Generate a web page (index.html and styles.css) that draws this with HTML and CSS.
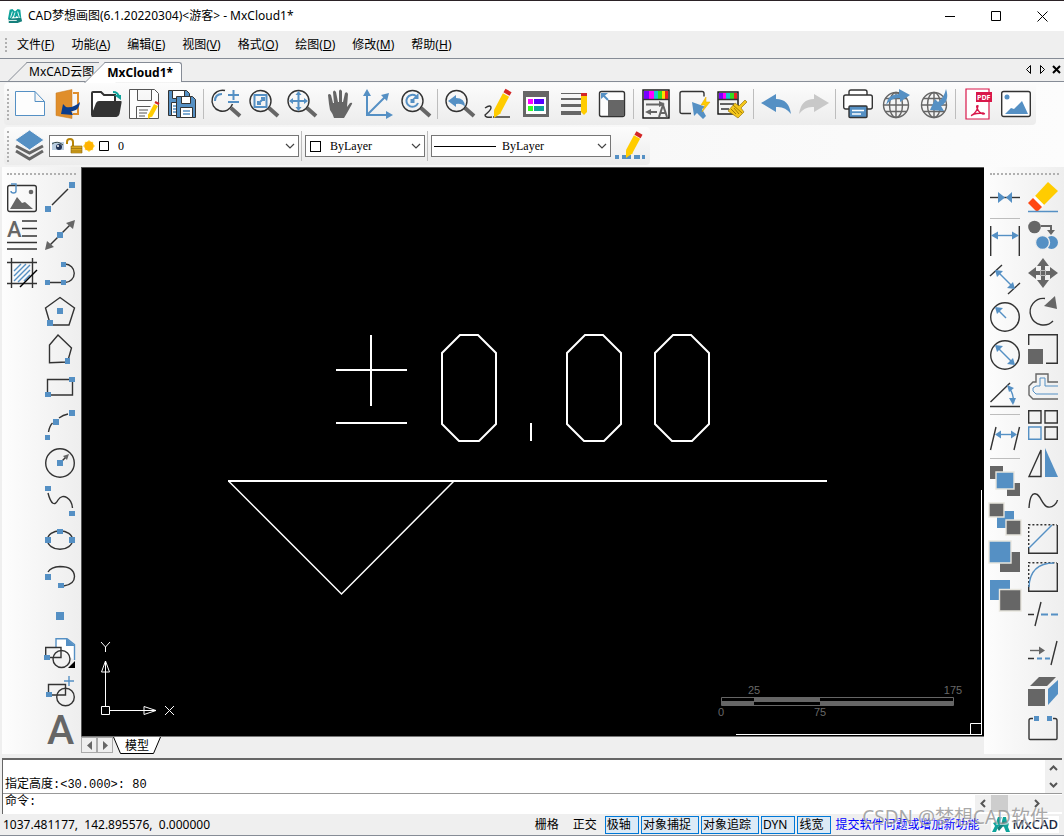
FILE: index.html
```html
<!DOCTYPE html>
<html lang="zh-CN">
<head>
  <meta charset="UTF-8" />
  <meta name="viewport" content="width=device-width, initial-scale=1.0"/>
  <title>CAD梦想画图</title>
  <link rel="stylesheet" href="styles.css">
</head>
<body>
  <svg class="defs" aria-hidden="true">
    <symbol id="lens" viewBox="0 0 30 30" overflow="visible">
      <path class="gl" stroke-width="4" d="M20 19l9 8"/>
      <circle cx="11.500" cy="12" r="10.500"/>
    </symbol>
    <symbol id="globe" viewBox="0 0 30 30" overflow="visible">
      <g class="gl"><circle cx="15" cy="16" r="12.500"/><ellipse cx="15" cy="16" rx="6.500" ry="12.500"/><path d="M15 3.500V28.500M2.500 16h25M4 9.500h22M4 22.500h22"/></g>
    </symbol>
    <symbol id="mx" viewBox="0 0 18 18">
      <path fill="#0fa39b" d="M3 2l3-1 3 3 3-3 3 1 1 9-3 0-2-2-2 2-2-2-2 3-4 1z"/>
      <path fill="#16807c" d="M2 12l14-1 1 4-5 2H2z"/>
      <path fill="none" stroke="#fff" d="M6 4L4 11M9 5l-2 6M12 4l2 7M2 14h9"/>
    </symbol>
    <symbol id="mxflat" viewBox="0 0 18 17">
      <path fill="#0fa39b" d="M6 1h4l-2 5 1 3-3 2-2 5H0l3-6-2-3 3-1zM11 1h3l1 5 2 1-1 4 2 5h-4l-2-5-3-2z"/>
      <path fill="#16807c" d="M5 12l7-7 1 3-6 7z"/>
    </symbol>
    <symbol id="chev" viewBox="0 0 10 10"><path fill="none" stroke="#444" stroke-width="1.200" d="M1 3l4 4 4-4"/></symbol>
  </svg>

  <header class="titlebar">
    <svg class="logo"><use href="#mx"/></svg>
    <h1>CAD梦想画图(6.1.20220304)&lt;游客&gt; - MxCloud1*</h1>
    <button class="win" aria-label="最小化"><svg viewBox="0 0 11 11"><path d="M0 5.500h10"/></svg></button>
    <button class="win" aria-label="最大化"><svg viewBox="0 0 11 11"><path d="M.5.5h9v9h-9z"/></svg></button>
    <button class="win" aria-label="关闭"><svg viewBox="0 0 11 11"><path d="M.5.5l10 10M10.500.5l-10 10"/></svg></button>
  </header>

  <nav class="menubar">
    <span class="grip"></span>
    <button>文件(<u>F</u>)</button>
    <button>功能(<u>A</u>)</button>
    <button>编辑(<u>E</u>)</button>
    <button>视图(<u>V</u>)</button>
    <button>格式(<u>O</u>)</button>
    <button>绘图(<u>D</u>)</button>
    <button>修改(<u>M</u>)</button>
    <button>帮助(<u>H</u>)</button>
  </nav>

  <div class="tabs">
    <button class="tab">MxCAD云图</button>
    <button class="tab active">MxCloud1*</button>
    <div class="tab-nav">
      <button aria-label="上一个"><svg viewBox="0 0 9 9"><path d="M6.500.5v8l-4-4z"/></svg></button>
      <button aria-label="下一个"><svg viewBox="0 0 9 9"><path d="M2.500.5v8l4-4z"/></svg></button>
      <button aria-label="关闭标签"><svg viewBox="0 0 9 9"><path stroke-width="2" d="M1 1l7 7M8 1L1 8"/></svg></button>
    </div>
  </div>

  <div class="toolbars">
    <div class="toolbar">
      <span class="grip"></span>
      <button class="tool" aria-label="新建"><svg viewBox="0 0 30 30"><path class="bl" fill="#fdfdfd" stroke-width="1" d="M.5 2.500H20l9.500 10v14H.5zM20 2.500v10h9.500"/></svg></button>
      <button class="tool" aria-label="打开"><svg viewBox="0 0 30 30"><path stroke="#e08e2b" stroke-width="2" d="M20 4h5v21h-5"/><path fill="#e08e2b" stroke="#c67a20" stroke-width=".5" d="M3 4L19 .5v29L3 26.500z"/><path fill="#0b3d8c" stroke="none" d="M27 13c-1 7-4 9-9 9l2 4-12-1 2-10 3 3c5 1 10-1 14-5z"/></svg></button>
      <button class="tool" aria-label="打开文件"><svg viewBox="0 0 30 30"><path fill="#fff" stroke="#333" stroke-width="2" d="M1 26V4q0-1 1-1h8l3 3h11v8"/><path fill="#333" stroke="none" d="M0 27L5 14q1-2 3-2h22q1 0 .5 2l-2 11q-1 3-3 3H1z"/><path stroke="#0fa39b" stroke-width="2" d="M22 3q5 0 6 5"/><path fill="#0fa39b" stroke="none" d="M23 6h7v5z"/></svg></button>
      <button class="tool" aria-label="保存"><svg viewBox="0 0 30 30"><path fill="#fdfdfd" stroke="#555" stroke-width="1" d="M.5.5h25l4 4v25H.5zM8.500.5v11h14V.5M7.500 29.500v-12h14M10 21h9M10 24h8M10 27h6"/><path stroke="#fc0" stroke-width="4.500" d="M27 16l-6 11"/><path stroke="#d32626" stroke-width="4.500" d="M28.500 13l-1 2"/><path fill="#fc0" stroke="none" d="M19 25l4 2-4 3z"/></svg></button>
      <button class="tool" aria-label="全部保存"><svg viewBox="0 0 30 30"><path fill="#5590c4" stroke-width="1" d="M1.500 1.500h18l3 3v22h-21z"/><path fill="#fff" stroke-width="1" d="M5.500 1.500h12v8h-12zM4.500 13.500h10v13h-10z"/><path class="bl" d="M6 17h6M6 20h6M6 23h6"/><path fill="#5590c4" stroke-width="1" d="M9.500 7.500h16l3 3v18h-19z"/><path fill="#fff" stroke-width="1" d="M14.500 7.500h9v7h-9zM13.500 18.500h12v10h-12z"/><path class="bl" d="M16 22h7M16 25h7"/></svg></button>
      <span class="sep"></span>
      <button class="tool" aria-label="缩放"><svg viewBox="0 0 30 30"><path class="gl" stroke-width="4" d="M20 19l9 8"/><path d="M14 1.500A10.500 10.500 0 1 0 21.500 15"/><path class="bl" stroke-width="2" d="M4 12q0-7 7-7M17 6h11M22.500 1v10M17 13h11"/></svg></button>
      <button class="tool" aria-label="窗口缩放"><svg viewBox="0 0 30 30"><use href="#lens"/><path class="bl" stroke-width="2" d="M5.500 6h12v12h-12zM9 15l6-6M9 12v3h3M12 9h3v3"/></svg></button>
      <button class="tool" aria-label="范围缩放"><svg viewBox="0 0 30 30"><use href="#lens"/><path class="bl" stroke-width="2" d="M11.500 5v14M5 12h13"/><path class="b" d="M11.500 2l3 4h-6zM11.500 22l3-4h-6zM2 12l4-3v6zM21 12l-4-3v6z"/></svg></button>
      <button class="tool" aria-label="平移"><svg viewBox="0 0 30 30"><path class="g" d="M9 29q-1-4-4-8l-1-6-1-9q1-2 3 0l2 8h1L8 3q1-3 3 0l2 10h1V2q1-3 3 0v11h1l2-9q2-2 3 1l-1 13 3-4q3-1 2 1l-5 9-3 5z"/></svg></button>
      <button class="tool" aria-label="坐标系"><svg viewBox="0 0 30 30"><path class="bl" stroke-width="2" d="M4 5v21h20M4 26L22 8"/><path class="b" d="M4 0l4 7H0zM30 26l-7 4v-8zM26 4l-2 8-6-6z"/></svg></button>
      <button class="tool" aria-label="动态缩放"><svg viewBox="0 0 30 30"><use href="#lens"/><path class="bl" stroke-width="2" d="M15 7a6 6 0 1 0 2 7"/><path class="b" d="M17.500 4v6h-6zM9.500 10h4v4h-4z"/></svg></button>
      <span class="sep"></span>
      <button class="tool" aria-label="上一视图"><svg viewBox="0 0 30 30"><use href="#lens"/><path class="b" d="M3 12l8-6v3q9 0 9 9-3-4-9-3v3z"/></svg></button>
      <button class="tool" aria-label="编辑"><svg viewBox="0 0 30 30"><path class="gl" stroke-width="2" d="M10 28h17"/><path d="M2 19q6-4 6 0 0 2-6 7 0 3 7 2"/><path stroke="#fc0" stroke-width="7" d="M23 6l-9 17"/><path stroke="#d32626" stroke-width="7" d="M25.500 1.500L23.500 5"/><path fill="#fc0" stroke="none" d="M11 21l7 3-7 5z"/></svg></button>
      <button class="tool" aria-label="属性"><svg viewBox="0 0 30 30"><path class="g" d="M2 2h26v26H2z"/><path fill="#fff" stroke="none" d="M5 8h20v17H5z"/><path fill="#f0f" stroke="none" d="M7 10h5v5H7z"/><path fill="#50f" stroke="none" d="M13 10h10v5H13z"/><path fill="#3f2" stroke="none" d="M7 17h5v5H7z"/><path fill="#0fa39b" stroke="none" d="M13 17h10v5H13z"/></svg></button>
      <button class="tool" aria-label="线型"><svg viewBox="0 0 30 30"><path class="gl" stroke-width="1" d="M2 4.500h20"/><path class="gl" stroke-width="2" d="M2 10h20"/><path class="gl" stroke-width="3" d="M2 16.500h20"/><path class="gl" stroke-width="4" d="M2 24h20"/><path fill="#fc0" stroke="none" d="M22 6h6v17l-3 3-3-3z"/><path fill="#d32626" stroke="none" d="M22 4h6v3h-6z"/></svg></button>
      <button class="tool" aria-label="图块"><svg viewBox="0 0 30 30"><rect x="2.500" y="2.500" width="25" height="25" rx="2" fill="#fdfdfd"/><path class="g" d="M11 11h16v16H11z"/><path class="bl" stroke-width="2" d="M5 5l6 6"/><path class="b" d="M4 4h7l-7 6z"/></svg></button>
      <span class="sep"></span>
      <button class="tool" aria-label="文字样式"><svg viewBox="0 0 30 30"><rect x="2" y="1" width="26" height="28" fill="#f4f4f4" stroke="#111"/><g stroke="none"><path fill="#70f" d="M3 2h5v8H3z"/><path fill="#f0f" d="M8 2h5v8H8z"/><path fill="#1cc" d="M13 2h4v8h-4z"/><path fill="#3d2" d="M17 2h4v8h-4z"/><path fill="#fd0" d="M21 2h3v8h-3z"/><path fill="#e22" d="M24 2h3v8h-3z"/></g><path d="M2 10.500h26"/><path class="gl" stroke-width="2" d="M5 15.500h17M8 23h8M18 28l4-12 4 12M19 24h6"/><path class="g" d="M24 15l-6-3v6zM4 23l6-3v6z"/></svg></button>
      <button class="tool" aria-label="快速选择"><svg viewBox="0 0 30 30"><path d="M12 24.500H3q-2 0-2-2v-18q0-2 2-2h20q2 0 2 2v3"/><path class="b" d="M13 13l14 5-4 2 4 7-3 3-6-6-3 3z"/><path fill="#fc0" stroke="#e4a800" stroke-width=".5" d="M27 8l-5 8h4l-3 7 8-10h-4z"/></svg></button>
      <button class="tool" aria-label="特性匹配"><svg viewBox="0 0 30 30"><rect x="1" y="3" width="20" height="22" fill="#f4f4f4" stroke="#111"/><g stroke="none"><path fill="#70f" d="M2 4h4v6H2z"/><path fill="#f0f" d="M6 4h3v6H6z"/><path fill="#1cc" d="M9 4h4v6H9z"/><path fill="#3d2" d="M13 4h4v6h-4z"/><path fill="#e22" d="M17 4h3v6h-3z"/></g><path d="M1 10.500h20M3 15h14"/><path class="gl" stroke-width="2" d="M4 20h8"/><path fill="#f5c61a" stroke="#8a6a00" stroke-width=".6" d="M18 14l4 3 6-6 2 2-6 6 3 4-6 6-10-7z"/><path stroke="#8a6a00" stroke-width=".8" d="M16 16l9 8M14 20l5 5M17 19l5 6"/></svg></button>
      <span class="sep"></span>
      <button class="tool" aria-label="撤销"><svg viewBox="0 0 30 30"><path class="b" d="M0 14L15 5v5q13 0 15 15-6-8-15-7v5z"/></svg></button>
      <button class="tool" aria-label="重做"><svg viewBox="0 0 30 30"><path fill="#c8c8c8" stroke="none" d="M30 14L15 5v5Q2 10 0 25q6-8 15-7v5z"/></svg></button>
      <span class="sep"></span>
      <button class="tool" aria-label="打印"><svg viewBox="0 0 30 30"><path fill="#fff" d="M6 7V3q0-2 2-2h14q2 0 2 2v4"/><rect x=".7" y="6" width="28.600" height="14" rx="2" fill="#fff"/><rect x="6" y="17" width="18" height="11.500" rx="1" fill="#5590c4"/><path stroke="#fff" d="M9 21.500h12M9 25h9"/></svg></button>
      <button class="tool" aria-label="发布"><svg viewBox="0 0 30 30"><use href="#globe"/><path class="b" d="M5 16q2-11 13-11V0l11 6-10 7V9q-8-1-14 7z"/></svg></button>
      <button class="tool" aria-label="下载"><svg viewBox="0 0 30 30"><use href="#globe"/><path class="b" d="M27 0q4 12-5 17l3 5-14-1 5-11 3 3q6-4 8-13z"/></svg></button>
      <span class="sep"></span>
      <button class="tool" aria-label="导出PDF"><svg viewBox="0 0 30 30"><path fill="#fff" stroke="#d9174a" stroke-width="1.200" d="M3 0h23v30H3z"/><path fill="#d9174a" stroke="none" d="M13 3h16v10H13z"/><text class="pdf" x="14" y="11">PDF</text><path stroke="#d9174a" d="M9 26q5-3 6-9-2-1-1 2 2 5 6 6 3 0 0-1-7 0-11 2-1 1 0 0z"/></svg></button>
      <button class="tool" aria-label="导出图片"><svg viewBox="0 0 30 30"><rect x=".7" y="2.500" width="28.600" height="25" rx="2" fill="#fff"/><circle class="b" cx="6" cy="8" r="2.500"/><path class="b" d="M4 25l6-6 3 1 8-8 6 13z"/></svg></button>
    </div>

    <div class="toolbar props">
      <span class="grip"></span>
      <button class="tool" aria-label="图层"><svg viewBox="0 0 30 30"><path class="gl" stroke-width="3" d="M1 20l13.500 8L28 20M1 15l13.500 7L28 15"/><path fill="#5590c4" stroke="#f7f7f7" stroke-width="1" d="M14.500-1L29 9l-14.500 10L0 9z"/></svg></button>
      <div class="combo layer">
        <svg class="state" viewBox="0 0 58 16">
          <path fill="#b9cde0" d="M1 4h12v8H1z"/><path fill="none" stroke="#344" d="M1 6q5-4 11 1"/><circle cx="8" cy="9" r="3" fill="#235"/><circle cx="7" cy="8" r="1" fill="#fff"/>
          <path fill="none" stroke="#b8860b" stroke-width="2" d="M16 6V4q0-3 3-3t3 3v4"/><path fill="#d9a520" stroke="#8a6508" stroke-width=".6" d="M20 8h11v7H20zM20 10.500h11M20 13h11"/>
          <path stroke="#fe6" stroke-width="1.500" d="M38 2v12M32 8h12M34 4l8 8M42 4l-8 8"/><circle cx="38" cy="8" r="4.800" fill="#ffb300"/>
          <path fill="#fff" stroke="#000" d="M48.500 3.500h9v9h-9z"/>
        </svg>
        <select aria-label="图层"><option>0</option></select>
        <svg class="chev"><use href="#chev"/></svg>
      </div>
      <span class="sep"></span>
      <div class="combo color">
        <span class="swatch"></span>
        <select aria-label="颜色"><option>ByLayer</option></select>
        <svg class="chev"><use href="#chev"/></svg>
      </div>
      <span class="sep"></span>
      <div class="combo linetype">
        <span class="line"></span>
        <select aria-label="线型"><option>ByLayer</option></select>
        <svg class="chev"><use href="#chev"/></svg>
      </div>
      <button class="tool" aria-label="线型管理"><svg viewBox="0 0 30 30"><path class="bl" stroke-width="4" stroke-dasharray="4 3 9 3 6 2" d="M0 26h30"/><path stroke="#fc0" stroke-width="7" d="M22 6l-8 15"/><path stroke="#d32626" stroke-width="7" d="M24.500 2l-2 3.500"/><path fill="#fc0" stroke="none" d="M11 19l7 3-7 5z"/></svg></button>
    </div>
  </div>

  <main class="workspace">
    <aside class="palette left">
      <span class="grip-h"></span>
      <div class="cols">
        <div class="col">
          <button class="tool" aria-label="图像"><svg viewBox="0 0 30 30"><rect x=".7" y="3.500" width="28.600" height="26" rx="2"/><path class="g" d="M3 27l7-12 5 6 3-1 8 7z"/><circle class="g" cx="24" cy="10" r="2.300"/><path class="bl" d="M4 2h5v7q0 2-2.500 2T4 9"/></svg></button>
          <button class="tool" aria-label="多行文字"><svg viewBox="0 0 30 30"><text class="glyph small" x="0" y="17">A</text><path d="M15 1h15M15 8.500h15M15 16h15M0 22.500h30M0 29h30"/></svg></button>
          <button class="tool" aria-label="填充"><svg viewBox="0 0 30 30"><path class="bl" d="M7 13l7-7M7 18L19 6M7 23L23 7M11 24l12-12M17 23l6-6"/><path d="M0 4.500h30M0 25.500h30M4.500 0v30M25.500 0v30"/><path stroke="#000" d="M30 12L13 29"/></svg></button>
        </div>
        <div class="col">
          <button class="tool" aria-label="直线"><svg viewBox="0 0 30 30"><path d="M7 23L23 7"/><path class="b" d="M0 24h6v6H0zM24 0h6v6h-6z"/></svg></button>
          <button class="tool" aria-label="构造线"><svg viewBox="0 0 30 30"><path d="M4 26L26 4"/><path class="g" d="M30 0l-2 9-7-6zM0 30l2-9 7 6z"/><path class="b" d="M12 12h6v6h-6z"/></svg></button>
          <button class="tool" aria-label="多段线"><svg viewBox="0 0 30 30"><path d="M4 24.500h14M20 6a9.200 9.200 0 0 1 0 18.500"/><path class="b" d="M0 22h5v5H0zM16 4h5v5h-5zM16 22h5v5h-5z"/></svg></button>
          <button class="tool" aria-label="正多边形"><svg viewBox="0 0 30 30"><path d="M15 1.500l14.500 10.500L24 29H5.500L.5 12z"/><path class="b" d="M12 12h6v6h-6zM2 24h6v6H2z"/></svg></button>
          <button class="tool" aria-label="多边形"><svg viewBox="0 0 30 30"><path d="M13 1l13.500 13-4 14-18 .8V11z"/><path class="b" d="M20 24h5v6h-5z"/></svg></button>
          <button class="tool" aria-label="矩形"><svg viewBox="0 0 30 30"><path d="M2.500 7.500h25v15.500h-25z"/><path class="b" d="M24 5h6v5h-6zM0 20h6v5H0z"/></svg></button>
          <button class="tool" aria-label="圆弧"><svg viewBox="0 0 30 30"><path d="M3.500 22q1-6 4-9M14 8q4-3 9-4"/><path class="b" d="M0 25h5v5H0zM8 9h6v6H8zM24 0h6v6h-6z"/></svg></button>
          <button class="tool" aria-label="圆"><svg viewBox="0 0 30 30"><circle cx="15" cy="15" r="14.300"/><path d="M15 15l6-6"/><path class="g" d="M24 6l-2 6-4-4z"/><path class="b" d="M12 12h6v6h-6z"/></svg></button>
          <button class="tool" aria-label="样条曲线"><svg viewBox="0 0 30 30"><path d="M3 7c3 12 7 13 10 7 5-8 14-1 14.500 8"/><path class="b" d="M0 0h6v5H0zM24 25h6v5h-6z"/></svg></button>
          <button class="tool" aria-label="椭圆"><svg viewBox="0 0 30 30"><ellipse cx="15" cy="16" rx="12.500" ry="9.300"/><path class="b" d="M12 5h6v5h-6zM0 13h6v6H0zM24 13h6v6h-6z"/></svg></button>
          <button class="tool" aria-label="椭圆弧"><svg viewBox="0 0 30 30"><path d="M3 10q3-5 12-5.500 14 0 14.500 10 0 8-11 9.500"/><path class="b" d="M0 12h6v6H0zM13 21h6v5h-6z"/></svg></button>
          <button class="tool" aria-label="点"><svg viewBox="0 0 30 30"><path class="b" d="M11 12h8v8h-8z"/></svg></button>
          <button class="tool" aria-label="插入块"><svg viewBox="0 0 30 30"><path class="bl" fill="#fff" d="M11 10V.7h11l7.500 6V22"/><path class="b" d="M21 0l9 8h-9z"/><path d="M.7 9.500H16v10H.7z"/><circle cx="16.500" cy="21" r="8.500"/><path class="b" d="M-1 17h6v5h-6z"/><path fill="#000" stroke="none" d="M30 23v7h-7z"/></svg></button>
          <button class="tool" aria-label="创建块"><svg viewBox="0 0 30 30"><path class="bl" d="M24 0v10M19 5h10"/><path d="M3.500 8.500h17v10.500h-17z"/><circle cx="20.500" cy="21" r="8.800"/><path class="b" d="M1 16h6v5H1z"/></svg></button>
          <button class="tool" aria-label="单行文字"><svg viewBox="0 0 30 30"><text class="glyph" x="2" y="30">A</text></svg></button>
        </div>
      </div>
    </aside>

    <section class="view">
      <svg class="drawing">
        <g class="w">
          <path d="M289 167v71M254 202h71M254 255h71M449 255v18" stroke-width="2"/>
          <path id="zero" stroke-width="2" d="M378 167h18l18 18v71l-17 17h-20l-17-17v-71z"/>
          <use href="#zero" x="125"/>
          <use href="#zero" x="213"/>
          <path d="M146 313h599" stroke-width="2"/>
          <path d="M146.500 313L259.500 426 372 313" stroke-width="1.500"/>
        </g>
        <!-- ucs axes, bottom left -->
        <svg y="100%" overflow="visible">
          <g class="w">
            <path d="M19.500-29.500h8v8h-8zM23.500-30v-34M28-25.500h34M23.500-75l-4 11h8zM23.500-75v11M74-25.500l-12-4v8zM74-25.500h-12M19-94l4.500 5 4.500-5M23.500-89v5M83-30l9 9M92-30l-9 9"/>
          </g>
        </svg>
        <!-- scale bar and cursor, bottom right -->
        <svg x="100%" y="100%" overflow="visible">
          <path fill="none" stroke="#666" d="M-262.500-38.500h232v8h-232z"/>
          <path fill="#666" d="M-263-35h33v4h-33zM-230-38h66v4h-66zM-164-35h134v4h-134z"/>
          <g class="scale">
            <text x="-230" y="-42">25</text><text x="-31" y="-42">175</text>
            <text x="-263" y="-20">0</text><text x="-164" y="-20">75</text>
          </g>
          <path class="w" d="M-2.500-246v244M-248-1.500h246M-13.500-12.500h11v11h-11z"/>
        </svg>
      </svg>
      <div class="sheets">
        <button class="step" aria-label="前一页"><svg viewBox="0 0 9 9"><path d="M7 0v9L2 4.500z"/></svg></button>
        <button class="step" aria-label="后一页"><svg viewBox="0 0 9 9"><path d="M2 0v9l5-4.500z"/></svg></button>
        <button class="sheet"><svg viewBox="0 0 48 17" preserveAspectRatio="none"><path d="M.5 0l7 16.500h33L47.500 0"/></svg><span>模型</span></button>
      </div>
    </section>

    <aside class="palette right">
      <span class="grip-h"></span>
      <div class="cols">
        <div class="col">
          <button class="tool" aria-label="打断标注"><svg viewBox="0 0 30 30"><path d="M0 15.500h30"/><path class="b" d="M8 10l7 5.500L8 21zM22 10l-6 5.500 6 5.500z"/></svg></button>
          <span class="sep-h"></span>
          <button class="tool" aria-label="线性标注"><svg viewBox="0 0 30 30"><path d="M.7 0v30M29.300 0v30"/><path class="bl" d="M5 9.500h20"/><path class="b" d="M1 9.500l7-4v8zM29 9.500l-7-4v8z"/></svg></button>
          <button class="tool" aria-label="对齐标注"><svg viewBox="0 0 30 30"><path d="M0 12L12 1M18 30l12-11"/><path class="bl" d="M8 8l15 15"/><path class="b" d="M5 6l8 1-6 6zM25 25l-8-1 6-6z"/></svg></button>
          <button class="tool" aria-label="半径标注"><svg viewBox="0 0 30 30"><circle cx="15" cy="15" r="14.300"/><path class="bl" d="M16 16l-8-8"/><path class="b" d="M5 5l8 1-6 6z"/></svg></button>
          <button class="tool" aria-label="直径标注"><svg viewBox="0 0 30 30"><circle cx="15" cy="15" r="14.300"/><path class="bl" d="M8 8l15 15"/><path class="b" d="M5 5l8 1-6 6zM25 25l-8-1 6-6z"/></svg></button>
          <button class="tool" aria-label="角度标注"><svg viewBox="0 0 30 30"><path d="M0 28.500h30M.5 24L20 5"/><path class="bl" d="M19 10q5 6 4.500 15"/><path class="b" d="M17 7l7 3-5 4zM23 27l-4-7h7z"/></svg></button>
          <span class="sep-h"></span>
          <button class="tool" aria-label="倾斜标注"><svg viewBox="0 0 30 30"><path d="M.5 28L6 5M24 28l5.500-23"/><path class="bl" d="M8 12.500h16"/><path class="b" d="M5 12.500l6-4v8zM27 12.500l-6-4v8z"/></svg></button>
          <span class="sep-h"></span>
          <button class="tool" aria-label="前置"><svg viewBox="0 0 30 30"><path class="g" d="M0 0h13v13H0zM17 17h13v13H17z"/><path fill="#5590c4" stroke="#e8e6de" d="M6 6h18v17H6z"/></svg></button>
          <button class="tool" aria-label="后置"><svg viewBox="0 0 30 30"><path class="b" d="M7 7h17v17H7z"/><path fill="#666" stroke="#e8e6de" d="M-1-1h15v14H-1zM16 16h15v15H16z"/></svg></button>
          <button class="tool" aria-label="置于顶层"><svg viewBox="0 0 30 30"><path class="g" d="M10 10h20v20H10z"/><path fill="#5590c4" stroke="#e8e6de" d="M-1-1h22v22H-1z"/></svg></button>
          <button class="tool" aria-label="置于底层"><svg viewBox="0 0 30 30"><path class="b" d="M0 0h20v20H0z"/><path fill="#666" stroke="#e8e6de" d="M9.500 9.500H31V31H9.500z"/></svg></button>
        </div>
        <div class="col">
          <button class="tool" aria-label="删除"><svg viewBox="0 0 30 30"><path fill="#fc0" stroke="none" d="M20 0l10 9-14 14-9-9z"/><path fill="#fff" stroke="none" d="M7 14l9 9-2 2-9-9z"/><path fill="#ff4713" stroke="none" d="M5 16l9 9-4 4H8l-8-8z"/><path class="bl" stroke-width="1.500" d="M0 29.500h30"/></svg></button>
          <button class="tool" aria-label="复制"><svg viewBox="0 0 30 30"><circle class="g" cx="6.500" cy="7" r="6.300"/><path class="gl" stroke-width="2" d="M13 6h10v5"/><path class="g" d="M19 10h8l-4 5z"/><circle class="b" cx="23.500" cy="22.500" r="6.500"/><circle cx="14.500" cy="22.500" r="7" fill="#5590c4" stroke="#eee"/></svg></button>
          <button class="tool" aria-label="移动"><svg viewBox="0 0 30 30"><path class="gl" stroke-width="4" d="M15 4v22M4 15h22"/><path class="g" d="M15 0l6 8H9zM15 30l6-8H9zM0 15l8-6v12zM30 15l-8-6v12z"/><path fill="#666" stroke="#bbb" stroke-width="1" d="M12.500 12.500h5v5h-5z"/></svg></button>
          <button class="tool" aria-label="旋转"><svg viewBox="0 0 30 30"><path d="M17 2.500A13.300 13.300 0 1 0 25 25"/><path class="g" d="M16 10L27 0l2 13z"/></svg></button>
          <button class="tool" aria-label="缩放对象"><svg viewBox="0 0 30 30"><path d="M.7 11V.7h28.600v28.600H18"/><path class="g" d="M0 15h15v15H0z"/></svg></button>
          <button class="tool" aria-label="偏移"><svg viewBox="0 0 30 30"><path class="gl" d="M30 27H5l-4-4V14l4-4h3V2h12v8h10"/><path class="bl" stroke-width="1" d="M30 22H8l-3-3v-3l3-2h4V6h5v8h13"/></svg></button>
          <button class="tool" aria-label="阵列"><svg viewBox="0 0 30 30"><path d="M.7.7H13V13H.7zM17 .7h12.300V13H17zM17 17h12.300v12.300H17z"/><path class="bl" d="M.7 17H13v12.300H.7z"/></svg></button>
          <button class="tool" aria-label="镜像"><svg viewBox="0 0 30 30"><path d="M13 2v26.500H1z"/><path class="b" d="M17 0l13 29H17z"/></svg></button>
          <button class="tool" aria-label="样条编辑"><svg viewBox="0 0 30 30"><path d="M1 22q1-16 7-14c5 1 6 12 12 13 5 1 9-4 9.500-7"/></svg></button>
          <button class="tool" aria-label="倒角"><svg viewBox="0 0 30 30"><path d="M29.300 1v28.300H.7V25"/><path stroke-dasharray="2 2" d="M.7 25V.7H29"/><path class="bl" d="M1 24L24 1"/></svg></button>
          <button class="tool" aria-label="圆角"><svg viewBox="0 0 30 30"><path d="M29.300 1v28.300H.7V25"/><path stroke-dasharray="2 2" d="M.7 25V.7H29"/><path class="bl" d="M1 25Q2 1 26 1"/></svg></button>
          <button class="tool" aria-label="修剪"><svg viewBox="0 0 30 30"><path d="M0 14.500h6M7 26l6-24"/><path class="bl" stroke-width="2" d="M13 14.500h7M23 14.500h7"/></svg></button>
          <button class="tool" aria-label="延伸"><svg viewBox="0 0 30 30"><path d="M0 20.500h6M23 27l6-24"/><path class="gl" d="M2 12.500h11"/><path class="g" d="M17 12.500l-6-4v8z"/><path class="bl" stroke-width="2" d="M9 20.500h5M17 20.500h5"/></svg></button>
          <button class="tool" aria-label="分解"><svg viewBox="0 0 30 30"><path class="g" d="M0 13h17v17H0zM2 10l9-9h17l-9 9z"/><path class="b" d="M20 13L30 4v14l-10 11z"/></svg></button>
          <button class="tool" aria-label="打断"><svg viewBox="0 0 30 30"><path d="M5 4.500H3q-2 0-2 2v18q0 1 1 1h26q1 0 1-1v-18q0-2-2-2h-2"/><path class="b" d="M6 2h5v5H6zM19 2h5v5h-5z"/></svg></button>
        </div>
      </div>
    </aside>
  </main>

  <section class="command">
    <div class="history">
      <output>指定高度:&lt;30.000&gt;: 80</output>
      <div class="vscroll">
        <button aria-label="向上"><svg viewBox="0 0 9 9"><path d="M1 6l3.500-3.500L8 6"/></svg></button>
        <button aria-label="向下"><svg viewBox="0 0 9 9"><path d="M1 3l3.500 3.500L8 3"/></svg></button>
      </div>
    </div>
    <div class="prompt">
      <label for="cmd">命令:</label>
      <input id="cmd" type="text">
      <div class="hscroll">
        <button aria-label="向左"><svg viewBox="0 0 9 9"><path d="M6 1L2.500 4.500 6 8"/></svg></button>
        <span class="thumb"></span>
        <button aria-label="向右"><svg viewBox="0 0 9 9"><path d="M3 1l3.500 3.500L3 8"/></svg></button>
      </div>
    </div>
  </section>

  <footer class="statusbar">
    <span class="coords">1037.481177,&nbsp; 142.895576,&nbsp; 0.000000</span>
    <button>栅格</button>
    <button>正交</button>
    <button class="on">极轴</button>
    <button class="on">对象捕捉</button>
    <button class="on">对象追踪</button>
    <button class="on">DYN</button>
    <button class="on">线宽</button>
    <a href="#feedback">提交软件问题或增加新功能</a>
    <span class="brand"><svg><use href="#mxflat"/></svg>MxCAD</span>
    <span class="watermark">CSDN @梦想CAD软件</span>
  </footer>
</body>
</html>
```
FILE: styles.css
```css
* {
  box-sizing: border-box;
}

body {
  margin: 0;
  height: 100vh;
  display: flex;
  flex-direction: column;
  background-color: #efefef;
  color: #000;
  font-family: "Noto Sans", "Noto Sans CJK SC", sans-serif;
  font-size: 12px;
  line-height: 16px;
  overflow: hidden;
}

button, select, input {
  font: inherit;
  color: inherit;
  background: none;
  border: none;
  padding: 0;
  margin: 0;
}

svg {
  display: block;
}

.defs {
  position: absolute;
  width: 0;
  height: 0;
}

/* Titulo y menu */

.titlebar {
  display: flex;
  align-items: center;
  height: 31px;
  background-color: #fff;
  border-top: 1px solid #2b2226;
  padding-left: 7px;
}

.logo {
  width: 16px;
  height: 16px;
}

.titlebar h1 {
  flex: 1;
  margin: 0 0 0 5px;
  font-size: 12px;
  font-weight: normal;
}

.win {
  width: 46px;
  height: 30px;
  display: flex;
  align-items: center;
  justify-content: center;
  padding-left: 3px;
}

.win svg {
  width: 11px;
  height: 11px;
  fill: none;
  stroke: #000;
}

.menubar {
  display: flex;
  align-items: center;
  gap: 1px;
  height: 28px;
  padding-left: 5px;
  border-bottom: 1px solid #868c96;
}

.menubar button {
  padding: 0 8px;
}

.grip {
  width: 2px;
  height: 31px;
  border-left: 2px dotted #b0b0b0;
}

.menubar .grip {
  height: 14px;
  margin-right: 1px;
}

/* Pestañas */

.tabs {
  display: flex;
  align-items: flex-end;
  height: 23px;
  border-bottom: 1px solid #868c96;
  padding-left: 27px;
}

.tab {
  position: relative;
  z-index: 0;
  height: 19px;
  border-top: 1px solid #868c96;
  padding: 0 5px 0 2px;
}

.tab::before {
  content: "";
  position: absolute;
  z-index: -1;
  top: -1px;
  left: 0;
  width: 30px;
  height: 19px;
  border-top: 1px solid #868c96;
  border-left: 1px solid #868c96;
  transform: skewX(-45deg);
  transform-origin: top left;
}

.tab.active {
  z-index: 1;
  height: 20px;
  margin-bottom: -1px;
  margin-left: 6px;
  padding: 0 8px 0 2px;
  background-color: #fff;
  border-right: 1px solid #868c96;
  border-radius: 0 3px 0 0;
  font-weight: bold;
}

.tab.active::before {
  height: 20px;
  background-color: #fff;
}

.tab-nav {
  display: flex;
  gap: 5px;
  margin-left: auto;
  padding: 0 3px 7px 0;
}

.tab-nav svg {
  width: 9px;
  height: 9px;
  fill: none;
  stroke: #000;
}

/* Barras de herramientas */

.toolbars {
  display: flex;
  flex-direction: column;
  align-items: flex-start;
  gap: 2px;
  padding: 1px 4px 2px;
  background: linear-gradient(to right, #f2f2f2, #fcfcfc);
}

.toolbar {
  display: flex;
  align-items: center;
  height: 42px;
  padding: 0 1px 0 3px;
  border-radius: 4px;
  background: linear-gradient(#fcfcfc, #ececec);
}

.toolbar.props {
  height: 38px;
}

.tool {
  flex: none;
  width: 38px;
  height: 38px;
  display: flex;
  align-items: center;
  justify-content: center;
}

.toolbar .grip {
  margin-right: 2px;
}

.tool svg {
  width: 30px;
  height: 30px;
  overflow: visible;
  fill: none;
  stroke: #333;
  stroke-width: 1.4;
}

.b {
  fill: #5590c4;
  stroke: none;
}

.g {
  fill: #666;
  stroke: none;
}

.bl {
  stroke: #5590c4;
}

.gl {
  stroke: #666;
}

.pdf {
  fill: #fff;
  stroke: none;
  font: bold 7px "Open Sans", sans-serif;
}

.glyph {
  fill: #666;
  stroke: none;
  font: 500 41px Roboto, sans-serif;
}

.glyph.small {
  font-size: 22px;
}

.sep {
  width: 6px;
  height: 30px;
  border-left: 1px solid #bdbdbd;
  margin-left: 2px;
  margin-right: -2px;
}

.combo {
  display: flex;
  align-items: center;
  height: 22px;
  padding: 0 3px 0 4px;
  background-color: #fff;
  border: 1px solid #767676;
  font-family: "Liberation Serif", serif;
}

.combo select {
  appearance: none;
  flex: 1;
  min-width: 0;
}

.combo.layer {
  width: 250px;
  padding-left: 1px;
}

.combo.color {
  width: 120px;
}

.combo.linetype {
  width: 180px;
  padding-left: 2px;
}

.state {
  width: 58px;
  height: 16px;
  margin-right: 9px;
}

.chev {
  width: 10px;
  height: 10px;
}

.swatch {
  width: 11px;
  height: 11px;
  border: 1px solid #000;
  margin-right: 9px;
}

.line {
  width: 62px;
  border-top: 1px solid #000;
  margin-right: 6px;
}

/* Zona de dibujo */

.workspace {
  flex: 1;
  min-height: 0;
  display: flex;
}

.palette {
  display: flex;
  flex-direction: column;
  width: 79px;
  padding: 6px 1px 0;
  background: linear-gradient(to right, #fdfdfd, #eee);
  overflow: hidden;
}

.left {
  margin-left: 2px;
}

.right {
  width: 80px;
  padding-left: 2px;
}

.grip-h {
  height: 5px;
  margin: 0 4px;
  border-top: 2px dotted #b0b0b0;
}

.cols, .view {
  display: flex;
}

.col {
  width: 38px;
  display: flex;
  flex-direction: column;
  align-items: center;
}

.sep-h {
  width: 30px;
  height: 4px;
  margin-top: 2px;
  border-top: 1px solid #bdbdbd;
}

.view {
  flex: 1;
  min-width: 0;
  flex-direction: column;
}

.drawing {
  flex: 1;
  min-height: 0;
  width: 100%;
  background-color: #000;
  border-left: 1px solid #555;
  border-top: 1px solid #555;
}

.w {
  fill: none;
  stroke: #fff;
}

.scale {
  fill: #686868;
  font: 11px "Liberation Sans", sans-serif;
  text-anchor: middle;
}

.sheets {
  display: flex;
  height: 18px;
  border-top: 1px solid #777;
}

.step {
  width: 16px;
  height: 16px;
  display: flex;
  align-items: center;
  justify-content: center;
  border: 1px solid #aaa;
}

.step svg {
  width: 9px;
  height: 9px;
  fill: #666;
}

.sheet {
  position: relative;
  width: 48px;
  height: 17px;
}

.sheet svg {
  position: absolute;
  top: 0;
  left: 0;
  width: 100%;
  height: 100%;
  fill: #fff;
  stroke: #000;
}

.sheet span {
  position: relative;
}

/* Linea de comandos */

.command {
  margin: 4px 2px 0;
  border-top: 2px solid #666;
  border-left: 1px solid #666;
  background-color: #fff;
  font-family: "Liberation Mono", "Noto Sans CJK SC", monospace;
}

.history {
  display: flex;
  height: 34px;
  border-bottom: 1px solid #999;
}

.history output {
  flex: 1;
  align-self: flex-end;
  padding-left: 2px;
}

.vscroll {
  width: 17px;
  display: flex;
  flex-direction: column;
  justify-content: space-around;
  align-items: center;
  background-color: #f0f0f0;
}

.vscroll svg, .hscroll svg {
  width: 9px;
  height: 9px;
  fill: none;
  stroke: #555;
  stroke-width: 2;
}

.prompt {
  display: flex;
  height: 20px;
  padding-left: 2px;
}

.prompt input {
  flex: 1;
  min-width: 0;
}

.hscroll {
  display: flex;
  align-items: center;
  height: 17px;
  margin-top: 1px;
  padding: 0 21px 0 4px;
  gap: 3px;
  background-color: #f0f0f0;
}

.thumb {
  width: 17px;
  height: 17px;
  margin-right: 21px;
  background-color: #cdcdcd;
}

.statusbar {
  position: relative;
  display: flex;
  align-items: center;
  gap: 2px;
  height: 22px;
  padding: 0 5px 0 3px;
  border-bottom: 1px solid #868c96;
}

.coords {
  flex: 1;
}

.statusbar button {
  height: 18px;
  padding: 0 5px;
  border: 1px solid transparent;
}

.statusbar .on {
  padding: 0 7px 0 1px;
  background-color: #dceaf6;
  border-color: #0078d7;
}

.statusbar a {
  margin: 0 9px 0 2px;
  color: #00f;
  text-decoration: none;
}

.brand {
  display: flex;
  align-items: center;
  gap: 3px;
  padding: 0 1px;
  background-color: #fff;
  color: #1d2a44;
  font: 600 13px/17px "Open Sans", sans-serif;
}

.brand svg {
  width: 18px;
  height: 17px;
}

.watermark {
  position: absolute;
  right: 15px;
  bottom: 8px;
  color: rgba(140, 140, 140, 0.75);
  font-size: 19px;
  line-height: 20px;
  text-shadow: 1px 1px 0 rgba(255, 255, 255, 0.6);
  pointer-events: none;
}
```
